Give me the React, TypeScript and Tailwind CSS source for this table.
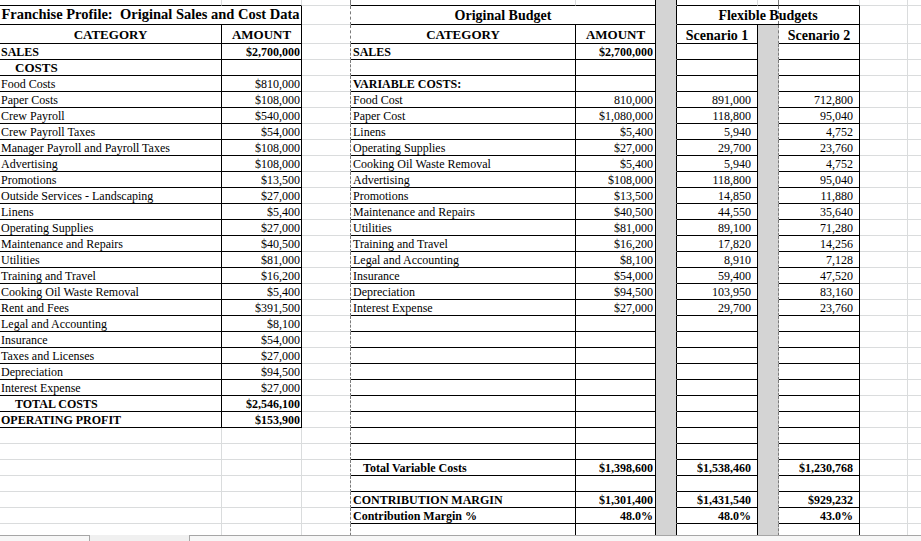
import React from 'react';

type Txt = { t: string; b?: boolean; al?: 'c' | 'r'; sz?: string; pad?: string };

const costs: [string, string][] = [
  ['Food Costs', '$810,000'],
  ['Paper Costs', '$108,000'],
  ['Crew Payroll', '$540,000'],
  ['Crew Payroll Taxes', '$54,000'],
  ['Manager Payroll and Payroll Taxes', '$108,000'],
  ['Advertising', '$108,000'],
  ['Promotions', '$13,500'],
  ['Outside Services - Landscaping', '$27,000'],
  ['Linens', '$5,400'],
  ['Operating Supplies', '$27,000'],
  ['Maintenance and Repairs', '$40,500'],
  ['Utilities', '$81,000'],
  ['Training and Travel', '$16,200'],
  ['Cooking Oil Waste Removal', '$5,400'],
  ['Rent and Fees', '$391,500'],
  ['Legal and Accounting', '$8,100'],
  ['Insurance', '$54,000'],
  ['Taxes and Licenses', '$27,000'],
  ['Depreciation', '$94,500'],
  ['Interest Expense', '$27,000'],
];

const variable: string[][] = [
  ['Food Cost', '810,000', '891,000', '712,800'],
  ['Paper Cost', '$1,080,000', '118,800', '95,040'],
  ['Linens', '$5,400', '5,940', '4,752'],
  ['Operating Supplies', '$27,000', '29,700', '23,760'],
  ['Cooking Oil Waste Removal', '$5,400', '5,940', '4,752'],
  ['Advertising', '$108,000', '118,800', '95,040'],
  ['Promotions', '$13,500', '14,850', '11,880'],
  ['Maintenance and Repairs', '$40,500', '44,550', '35,640'],
  ['Utilities', '$81,000', '89,100', '71,280'],
  ['Training and Travel', '$16,200', '17,820', '14,256'],
  ['Legal and Accounting', '$8,100', '8,910', '7,128'],
  ['Insurance', '$54,000', '59,400', '47,520'],
  ['Depreciation', '$94,500', '103,950', '83,160'],
  ['Interest Expense', '$27,000', '29,700', '23,760'],
];

const totals: Record<number, string[]> = {
  29: ['Total Variable Costs', '$1,398,600', '$1,538,460', '$1,230,768'],
  31: ['CONTRIBUTION MARGIN', '$1,301,400', '$1,431,540', '$929,232'],
  32: ['Contribution Margin %', '48.0%', '48.0%', '43.0%'],
};

const ROWS = 34;

const R_BLACK = 'border-r border-r-black';
const R_GRID = 'border-r border-r-[#dadcdd]';
const R_DASH = '[border-right:1px_dashed_#7a7a7a]';
const B_BLACK = 'border-b border-b-black';
const B_GRID = 'border-b border-b-[#dadcdd]';
const B_GRAY = 'border-b border-b-[#d4d4d4]';

// which column of table 2 a value sits in -> index into the row arrays
const valueCol: Record<number, number> = { 3: 0, 4: 1, 6: 2, 8: 3 };

function textAt(r: number, c: number): Txt | null {
  if (c === 0) {
    if (r === 2) return { t: 'CATEGORY', b: true, al: 'c', sz: 'text-[13px]' };
    if (r === 3) return { t: 'SALES', b: true };
    if (r === 4) return { t: 'COSTS', b: true, sz: 'text-[13px]', pad: 'pl-[15px]' };
    if (r >= 5 && r <= 24) return { t: costs[r - 5][0] };
    if (r === 25) return { t: 'TOTAL COSTS', b: true, pad: 'pl-[15px]' };
    if (r === 26) return { t: 'OPERATING PROFIT', b: true };
    return null;
  }
  if (c === 1) {
    if (r === 2) return { t: 'AMOUNT', b: true, al: 'c', sz: 'text-[13px]' };
    if (r === 3) return { t: '$2,700,000', b: true, al: 'r' };
    if (r >= 5 && r <= 24) return { t: costs[r - 5][1], al: 'r' };
    if (r === 25) return { t: '$2,546,100', b: true, al: 'r' };
    if (r === 26) return { t: '$153,900', b: true, al: 'r' };
    return null;
  }
  if (c === 3) {
    if (r === 2) return { t: 'CATEGORY', b: true, al: 'c', sz: 'text-[13px]' };
    if (r === 3) return { t: 'SALES', b: true };
    if (r === 5) return { t: 'VARIABLE COSTS:', b: true };
  }
  if (c === 4) {
    if (r === 2) return { t: 'AMOUNT', b: true, al: 'c', sz: 'text-[13px]' };
    if (r === 3) return { t: '$2,700,000', b: true, al: 'r' };
  }
  if (c === 6 && r === 2) return { t: 'Scenario 1', b: true, al: 'c', sz: 'text-[14px]' };
  if (c === 8 && r === 2) return { t: 'Scenario 2', b: true, al: 'c', sz: 'text-[14px]' };
  const vc = valueCol[c];
  if (vc === undefined) return null;
  if (r >= 6 && r <= 19) return { t: variable[r - 6][vc], al: vc === 0 ? undefined : 'r' };
  const tot = totals[r];
  if (tot) {
    return {
      t: tot[vc],
      b: true,
      al: vc === 0 ? undefined : 'r',
      pad: r === 29 && vc === 0 ? 'pl-[12px]' : undefined,
    };
  }
  return null;
}

function rightBorder(r: number, c: number) {
  switch (c) {
    case 0:
      return r >= 2 && r <= 26 ? R_BLACK : R_GRID;
    case 1:
      return r >= 1 && r <= 26 ? R_BLACK : R_GRID;
    case 2:
    case 7:
      return R_DASH;
    case 3:
    case 6:
      return r >= 2 ? R_BLACK : R_GRID;
    case 4:
    case 5:
      return R_BLACK;
    case 8:
      return r >= 1 ? R_BLACK : R_GRID;
    default:
      return R_GRID;
  }
}

function bottomBorder(r: number, c: number) {
  if (c === 0 || c === 1) return r <= 26 ? B_BLACK : B_GRID;
  if (c === 3 || c === 4 || c === 6 || c === 8) return r <= 32 ? B_BLACK : B_GRID;
  if (c === 5) return B_GRAY;
  if (c === 7) return r <= 1 ? B_BLACK : B_GRAY;
  return B_GRID;
}

function padFor(c: number, al?: 'c' | 'r') {
  if (al === 'c') return '';
  if (al === 'r') {
    if (c === 1) return 'pr-[1px]';
    if (c === 4) return 'pr-[2px]';
    return 'pr-[6px]';
  }
  return c === 3 ? 'pl-[2px]' : 'pl-[1px]';
}

function Cell({ r, c }: { r: number; c: number }) {
  const txt = textAt(r, c);
  const gray = c === 5 || (c === 7 && r >= 2);
  const align = txt?.al === 'c' ? 'justify-center' : txt?.al === 'r' ? 'justify-end' : 'justify-start';
  return (
    <div
      className={`flex items-center overflow-hidden whitespace-nowrap ${align} ${rightBorder(r, c)} ${bottomBorder(
        r,
        c
      )} ${gray ? 'bg-[#d4d4d4]' : 'bg-white'} ${r === 2 ? 'pt-[2px]' : ''} ${txt?.pad ?? padFor(c, txt?.al)}`}
    >
      {txt && (
        <span className={`${txt.sz ?? 'text-[12px]'} ${txt.b ? 'font-bold' : ''} leading-normal`}>{txt.t}</span>
      )}
    </div>
  );
}

export default function App() {
  const cells: React.ReactNode[] = [];
  for (let r = 0; r < ROWS; r++) {
    for (let c = 0; c < 11; c++) {
      if (r === 1) {
        if (c === 0) {
          cells.push(
            <div
              key="t1"
              className="col-span-2 flex items-center justify-center overflow-hidden whitespace-nowrap border-r border-b border-black bg-white"
            >
              <span className="text-[14.5px] font-bold leading-normal">Franchise Profile:&nbsp; Original Sales and Cost Data</span>
            </div>
          );
          continue;
        }
        if (c === 3) {
          cells.push(
            <div
              key="t2"
              className="col-span-2 flex items-center justify-center overflow-hidden whitespace-nowrap border-r border-b border-black bg-white"
            >
              <span className="text-[14px] font-bold leading-normal">Original Budget</span>
            </div>
          );
          continue;
        }
        if (c === 6) {
          cells.push(
            <div
              key="t3"
              className="relative col-span-3 flex items-center justify-center overflow-hidden whitespace-nowrap border-r border-b border-black bg-white"
            >
              <div className="absolute top-0 bottom-0 left-[101px] w-px [border-left:1px_dashed_#7a7a7a]" />
              <span className="relative text-[14px] font-bold leading-normal">Flexible Budgets</span>
            </div>
          );
          continue;
        }
        if (c === 1 || c === 4 || c === 7 || c === 8) continue;
      }
      cells.push(<Cell key={`${r}-${c}`} r={r} c={c} />);
    }
  }

  return (
    <div className="w-[921px] h-[541px] overflow-hidden bg-white text-black font-['Liberation_Serif','Times_New_Roman',serif]">
      <div className="h-[535px] overflow-hidden">
        <div className="grid grid-cols-[222px_80px_49px_225px_80px_21px_81px_21px_81px_48px_14px] grid-rows-[6px_19px_19px_repeat(31,16px)]">
          {cells}
        </div>
      </div>
      <div className="flex h-[6px] bg-[#f0f0f0]">
        <div className="w-[90px] border-t border-r border-[#a6a6a6] bg-[#f7f7f7]" />
        <div className="w-[99px]" />
        <div className="flex-1 border-t border-l border-[#a6a6a6] bg-[#f7f7f7]" />
      </div>
    </div>
  );
}
